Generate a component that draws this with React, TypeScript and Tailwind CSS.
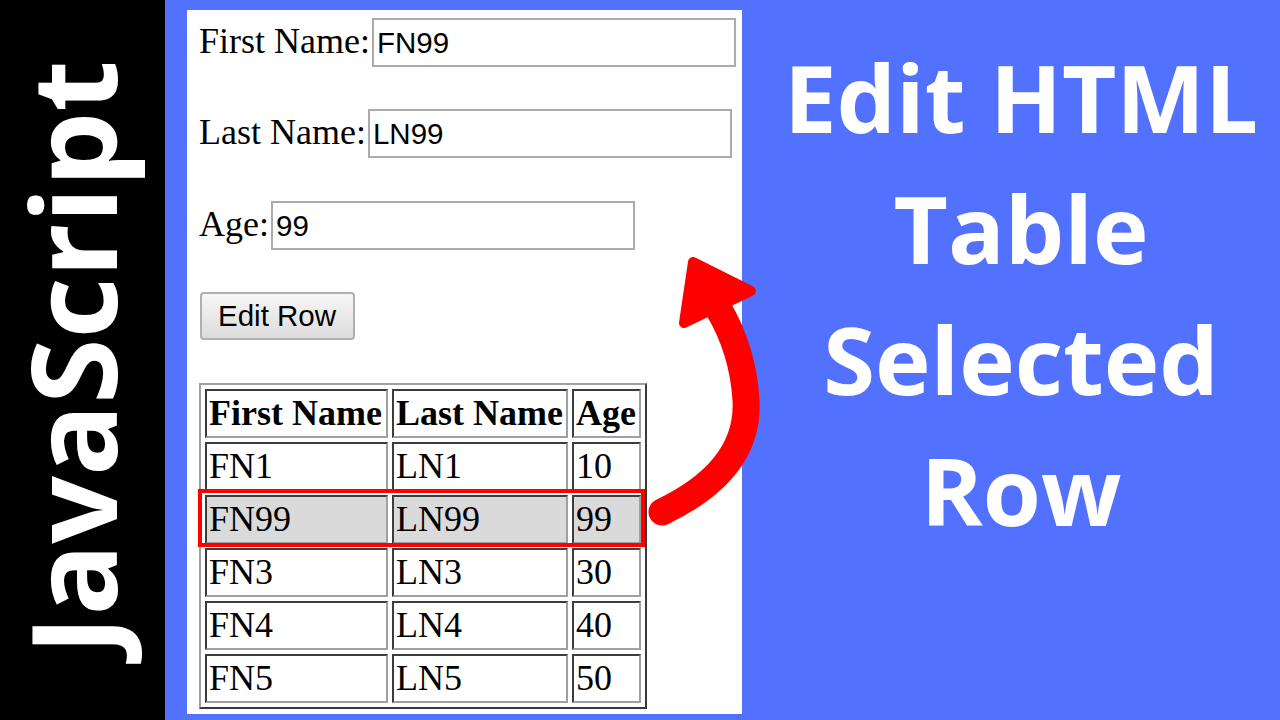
import React from "react";

const rows = [
  ["FN1", "LN1", "10"],
  ["FN99", "LN99", "99"],
  ["FN3", "LN3", "30"],
  ["FN4", "LN4", "40"],
  ["FN5", "LN5", "50"],
];

const cell =
  "border-2 border-t-[#3c3c3c] border-l-[#3c3c3c] border-r-[#a0a0a0] border-b-[#a0a0a0] p-[2px] h-[49px] text-left align-middle leading-[41px]";

function Field({ label, value, mt }: { label: string; value: string; mt: string }) {
  return (
    <div className={`flex items-baseline ${mt}`}>
      <span className="text-[36px] leading-[41px] text-black font-['Liberation_Serif',serif]">{label}</span>
      <input
        readOnly
        value={value}
        className="ml-[2px] w-[364px] h-[49px] border-2 border-[#ababab] bg-white px-[3px] text-[29.5px] leading-[34px] text-black font-['Liberation_Sans',Arial,sans-serif] outline-none"
      />
    </div>
  );
}

export default function App() {
  return (
    <div className="relative flex w-[1280px] h-[720px] overflow-hidden bg-[#5271ff]">
      {/* Left black bar */}
      <div className="flex w-[165px] h-full shrink-0 items-center justify-center bg-black pr-[23px] pb-[6px]">
        <span className="-rotate-90 whitespace-nowrap text-white font-bold text-[119px] leading-none font-['Open_Sans',sans-serif]">
          JavaScript
        </span>
      </div>

      {/* White panel */}
      <div className="ml-[22px] mt-[10px] w-[555px] h-[704px] shrink-0 bg-white pl-[12px] pt-[8px]">
        <Field label="First Name:" value="FN99" mt="" />
        <Field label="Last Name:" value="LN99" mt="mt-[42px]" />
        <Field label="Age:" value="99" mt="mt-[43px]" />
        <button className="mt-[42px] ml-[1px] flex h-[48px] w-[155px] items-center rounded-[4px] border-2 border-[#b0b0b0] bg-gradient-to-b from-[#f7f7f7] to-[#dcdcdc] pl-[16px] text-[29.5px] leading-[34px] text-black font-['Liberation_Sans',Arial,sans-serif]">
          Edit Row
        </button>

        <div className="relative mt-[43px] w-[448px]">
          <table className="table-fixed w-[448px] border-separate border-spacing-[4px] border-2 border-t-[#a0a0a0] border-l-[#a0a0a0] border-b-[#3a3a3a] border-r-[#3a3a3a] text-[36px] text-black font-['Liberation_Serif',serif]">
            <colgroup>
              <col className="w-[183px]" />
              <col className="w-[176px]" />
              <col className="w-[69px]" />
            </colgroup>
            <thead>
              <tr>
                <th className={`${cell} font-bold`}>First Name</th>
                <th className={`${cell} font-bold`}>Last Name</th>
                <th className={`${cell} font-bold`}>Age</th>
              </tr>
            </thead>
            <tbody>
              {rows.map((r, i) => (
                <tr key={i}>
                  {r.map((c, j) => (
                    <td key={j} className={`${cell} font-normal ${i === 1 ? "bg-[#dadada]" : ""}`}>
                      {c}
                    </td>
                  ))}
                </tr>
              ))}
            </tbody>
          </table>
          {/* red highlight frame */}
          <div className="pointer-events-none absolute left-[-1px] top-[106px] w-[447px] h-[58px] border-[4px] border-[#ff0000]" />
        </div>
      </div>

      {/* Right title */}
      <div className="flex-1 pl-[20px] pt-[32px] text-center text-white font-bold text-[94px] leading-[131px] font-['Open_Sans',sans-serif]">
        <div>Edit HTML</div>
        <div>Table</div>
        <div>Selected</div>
        <div>Row</div>
      </div>

      {/* Red curved arrow */}
      <svg className="pointer-events-none absolute inset-0" width="1280" height="720" viewBox="0 0 1280 720">
        <path
          d="M662 512 Q 750 470 746 400 Q 743 350 718 308"
          fill="none"
          stroke="#ff0000"
          strokeWidth="27"
          strokeLinecap="round"
        />
        <polygon
          points="693,262 751,291 684,323"
          fill="#ff0000"
          stroke="#ff0000"
          strokeWidth="10"
          strokeLinejoin="round"
        />
      </svg>
    </div>
  );
}
